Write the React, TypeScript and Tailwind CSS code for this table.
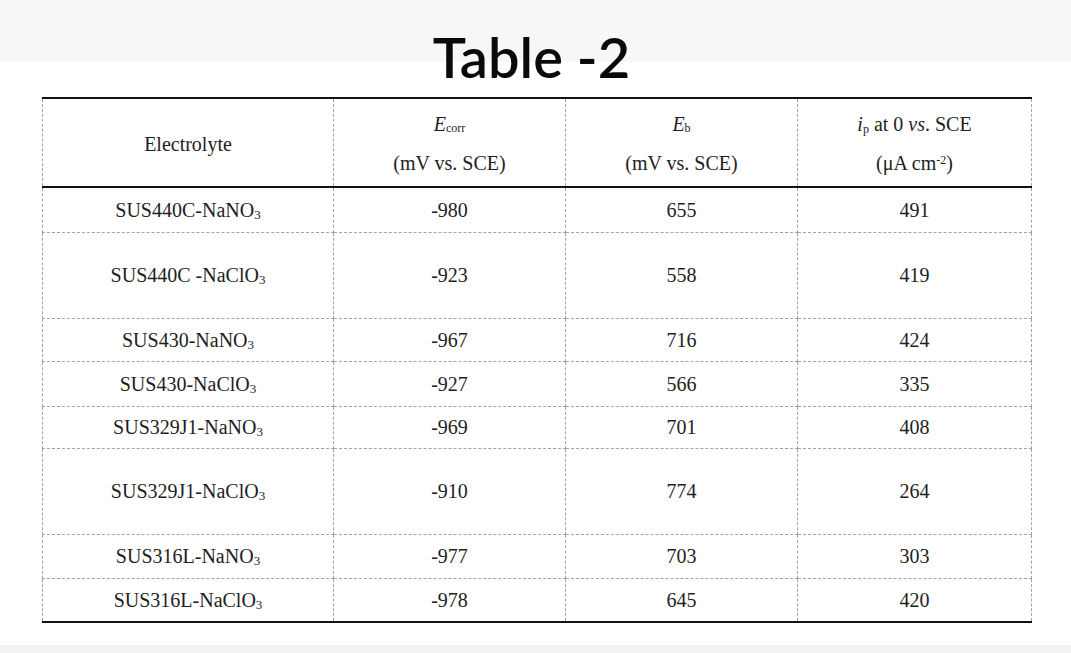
import React from "react";

const Sub = ({ c }: { c: string }) => <sub className="text-[13px] align-[-2px] bottom-0 leading-none">{c}</sub>;

const rows: { name: React.ReactNode; e: string; b: string; i: string; h: string }[] = [
  { name: <>SUS440C-NaNO<Sub c="3" /></>, e: "-980", b: "655", i: "491", h: "h-[45px]" },
  { name: <>SUS440C -NaClO<Sub c="3" /></>, e: "-923", b: "558", i: "419", h: "h-[86px]" },
  { name: <>SUS430-NaNO<Sub c="3" /></>, e: "-967", b: "716", i: "424", h: "h-[43px]" },
  { name: <>SUS430-NaClO<Sub c="3" /></>, e: "-927", b: "566", i: "335", h: "h-[45px]" },
  { name: <>SUS329J1-NaNO<Sub c="3" /></>, e: "-969", b: "701", i: "408", h: "h-[42px]" },
  { name: <>SUS329J1-NaClO<Sub c="3" /></>, e: "-910", b: "774", i: "264", h: "h-[86px]" },
  { name: <>SUS316L-NaNO<Sub c="3" /></>, e: "-977", b: "703", i: "303", h: "h-[44px]" },
  { name: <>SUS316L-NaClO<Sub c="3" /></>, e: "-978", b: "645", i: "420", h: "h-[44px]" },
];

export default function App() {
  const cell = "border border-dashed border-[#a3a3a3] text-center align-middle p-0";
  const head = `${cell} font-normal border-t-2 border-t-[#111] border-b-2 border-b-[#111]`;
  const hs = { borderTopStyle: "solid" as const, borderBottomStyle: "solid" as const };
  return (
    <div className="w-[1071px] h-[653px] overflow-hidden bg-[linear-gradient(to_bottom,#f7f7f7_0px,#f7f7f7_62px,#ffffff_62px,#ffffff_645px,#f3f3f3_645px)]">
      <div className="pt-[27px] h-[97px] flex justify-center pr-[8px]">
        <h1 className="text-[56px] leading-[60px] font-semibold text-[#0a0a0a] font-[Lato,sans-serif]">
          Table -2
        </h1>
      </div>
      <div className="pl-[42px]">
        <table className="border-collapse text-[20px] text-[#1e1e1e] font-[Liberation_Serif,Times_New_Roman,serif] table-fixed w-[989px]">
          <colgroup>
            <col className="w-[291px]" />
            <col className="w-[232px]" />
            <col className="w-[232px]" />
            <col className="w-[234px]" />
          </colgroup>
          <thead>
            <tr className="h-[89px]">
              <th className={head} style={hs}>
                <span className="relative top-[1px]">Electrolyte</span>
              </th>
              <th className={head} style={hs}>
                <div className="flex flex-col items-center gap-[14px] leading-[25px] pt-[2px]">
                  <span>
                    <i>E</i>
                    <sub className="text-[12px] align-[-1px] bottom-0 leading-none">corr</sub>
                  </span>
                  <span>(mV vs. SCE)</span>
                </div>
              </th>
              <th className={head} style={hs}>
                <div className="flex flex-col items-center gap-[14px] leading-[25px] pt-[2px]">
                  <span>
                    <i>E</i>
                    <sub className="text-[12px] align-[-1px] bottom-0 leading-none">b</sub>
                  </span>
                  <span>(mV vs. SCE)</span>
                </div>
              </th>
              <th className={head} style={hs}>
                <div className="flex flex-col items-center gap-[14px] leading-[25px] pt-[2px]">
                  <span>
                    <i>i</i>
                    <sub className="text-[12px] align-[-2px] bottom-0 leading-none">p</sub> at 0 <i>vs</i>. SCE
                  </span>
                  <span>
                    (μA cm<sup className="text-[12px] align-[6px] top-0 leading-none">-2</sup>)
                  </span>
                </div>
              </th>
            </tr>
          </thead>
          <tbody>
            {rows.map((r, idx) => {
              const last = idx === rows.length - 1;
              const extra = last ? "border-b-2 border-b-[#111]" : "";
              const st = last ? { borderBottomStyle: "solid" as const } : undefined;
              return (
                <tr key={idx} className={r.h}>
                  <td className={`${cell} ${extra}`} style={st}>{r.name}</td>
                  <td className={`${cell} ${extra}`} style={st}>{r.e}</td>
                  <td className={`${cell} ${extra}`} style={st}>{r.b}</td>
                  <td className={`${cell} ${extra}`} style={st}>{r.i}</td>
                </tr>
              );
            })}
          </tbody>
        </table>
      </div>
    </div>
  );
}
